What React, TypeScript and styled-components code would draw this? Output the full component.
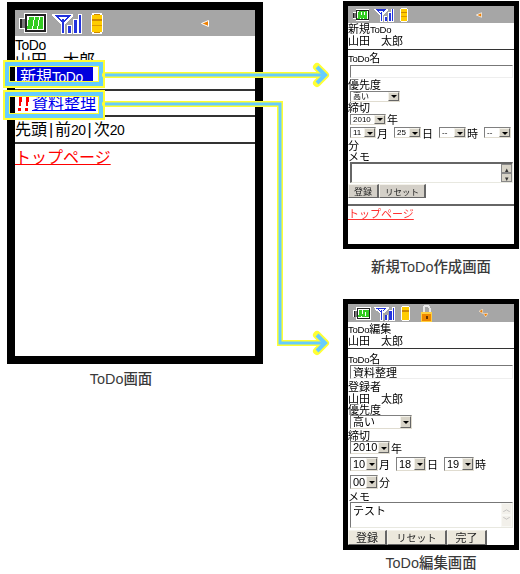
import React from 'react';
import styled, { createGlobalStyle } from 'styled-components';

const GlobalStyle = createGlobalStyle`
  html, body {
    margin: 0;
    padding: 0;
    background: #fff;
  }
`;

// status bar icons, drawn on a pixel grid
const BatteryIcon = ({ w, h }: { w: number; h: number }) => (
  <svg width={w} height={h} viewBox="0 0 28 20" shapeRendering="crispEdges">
    <rect x="5" y="0" width="23" height="20" fill="#fff" />
    <rect x="0" y="5" width="6" height="11" fill="#fff" />
    <rect x="6" y="1" width="21" height="18" fill="#222" />
    <rect x="1" y="6" width="5" height="9" fill="#777" />
    <rect x="1" y="6" width="2" height="9" fill="#222" />
    <rect x="8" y="3" width="17" height="14" fill="#fff" />
    <path d="M10 4h5l-2 12h-5zM16 4h4l-2 12h-4zM21 4h3v12h-5z" fill="#33cc22" />
  </svg>
);

const AntennaIcon = ({ w, h }: { w: number; h: number }) => (
  <svg width={w} height={h} viewBox="0 0 30 21" shapeRendering="crispEdges">
    <path d="M0 1h21v3l-8 7v10h-4v-10l-8-7z" fill="#fff" />
    <path d="M2 2h17l-7 7v11h-2v-11zM6 4l4 4v-2h2v2l3-4z" fill="#2233dd" fillRule="evenodd" />
    <rect x="15" y="12" width="5" height="9" fill="#fff" />
    <rect x="16" y="13" width="3" height="7" fill="#2233dd" />
    <rect x="21" y="6" width="5" height="15" fill="#fff" />
    <rect x="22" y="7" width="3" height="13" fill="#2233dd" />
    <rect x="26" y="1" width="4" height="20" fill="#fff" />
    <rect x="27" y="2" width="2" height="18" fill="#2233dd" />
  </svg>
);

const CoinIcon = ({ w, h }: { w: number; h: number }) => (
  <svg width={w} height={h} viewBox="0 0 12 21" shapeRendering="crispEdges">
    <rect x="1" y="0" width="10" height="21" fill="#fff" />
    <rect x="0" y="2" width="12" height="17" fill="#fff" />
    <rect x="1" y="2" width="10" height="4" fill="#ffcc00" />
    <rect x="1" y="8" width="10" height="11" fill="#ffcc00" />
    <rect x="3" y="1" width="6" height="1" fill="#cc8800" />
    <rect x="1" y="6" width="10" height="2" fill="#cc8800" />
    <rect x="1" y="12" width="10" height="1" fill="#dd9900" />
    <rect x="3" y="19" width="6" height="1" fill="#cc8800" />
  </svg>
);

const LockIcon = () => (
  <svg width={11} height={17} viewBox="0 0 11 17" shapeRendering="crispEdges">
    <path d="M2.5 8v-5l1.5-2h3l1.5 2v5" fill="none" stroke="#e8e8e8" strokeWidth="2" />
    <rect x="0" y="7" width="11" height="10" fill="#ffd040" />
    <rect x="1" y="9" width="9" height="7" fill="#ee8800" />
    <rect x="5" y="11" width="2" height="3" fill="#663300" />
  </svg>
);

const SignalArrow = ({ w, h, dual }: { w: number; h: number; dual?: boolean }) => (
  <svg width={w} height={h} viewBox={dual ? '0 0 10 9' : '0 0 8 7'}>
    {dual ? (
      <>
        <path d="M0 2.5L4 0v5z" fill="#f08000" stroke="#fff" strokeWidth="0.6" />
        <path d="M5 5h5L7.5 9z" fill="#f08000" stroke="#fff" strokeWidth="0.6" />
      </>
    ) : (
      <path d="M0.5 3.5L7.5 0.5v6z" fill="#f08000" stroke="#fff" strokeWidth="1" />
    )}
  </svg>
);

const UrgentIcon = () => (
  <svg width={14} height={17} viewBox="0 0 14 17" shapeRendering="crispEdges">
    <path d="M2 1h4l-1 1v2l-1 8h-2zM9 1h4l-1 1v2l-1 8h-2z" fill="#ff0000" />
    <rect x="1" y="14" width="3" height="3" fill="#ff0000" />
    <rect x="8" y="14" width="3" height="3" fill="#ff0000" />
  </svg>
);

const ArrowSelect = ({ value, w, h, wide }: { value: string; w: number; h: number; wide?: boolean }) => (
  <SelectBox $w={w} $h={h}>
    <SelectValue $wide={wide} $h={h}>{value}</SelectValue>
    <SelectButton />
  </SelectBox>
);

const NewScreen = () => (
  <>
    <Line $h={11}>新規<Half>ToDo</Half></Line>
    <Line $h={12}>山田　太郎</Line>
    <Divider $mt={3} />
    <Line $h={13} $mt={1}><Half>ToDo</Half>名</Line>
    <TextInput $h={13} $mt={1} />
    <Line $h={12}>優先度</Line>
    <Row $h={12}><ArrowSelect value="高い" w={50} h={11} /></Row>
    <Line $h={11}>締切</Line>
    <Row $h={12}>
      <Field><ArrowSelect value="2010" w={36} h={11} /><Unit>年</Unit></Field>
    </Row>
    <Row $h={13} $mt={1}>
      <Field><ArrowSelect value="11" w={26} h={11} /><Unit>月</Unit></Field>
      <Field><ArrowSelect value="25" w={27} h={11} /><Unit>日</Unit></Field>
      <Field><ArrowSelect value="--" w={27} h={11} /><Unit>時</Unit></Field>
      <Field><ArrowSelect value="--" w={27} h={11} /></Field>
    </Row>
    <Line $h={11} $mt={1}>分</Line>
    <Line $h={11}>メモ</Line>
    <Memo $h={21} $active>
      <Scroll><ScrollStep>▴</ScrollStep><ScrollStep>▾</ScrollStep></Scroll>
    </Memo>
    <Buttons $mt={1}>
      <FormButton $w={31} $h={14} $fs={9}>登録</FormButton>
      <FormButton $w={47} $h={14} $fs={8.5}>リセット</FormButton>
    </Buttons>
    <Divider $mt={6} $color="#666" $size={2} />
    <Line $h={13} $mt={1}><TopLink $soft>トップページ</TopLink></Line>
  </>
);

const EditScreen = () => (
  <>
    <Line $h={12}><Half>ToDo</Half>編集</Line>
    <Line $h={13}>山田　太郎</Line>
    <Divider $mt={1} />
    <Line $h={12} $mt={3}><Half>ToDo</Half>名</Line>
    <TextInput $h={14} $mt={1}>資料整理</TextInput>
    <Line $h={12} $mt={1}>登録者</Line>
    <Line $h={12}>山田　太郎</Line>
    <Line $h={11}>優先度</Line>
    <Row $h={14}><ArrowSelect value="高い" w={62} h={14} wide /></Row>
    <Line $h={12}>締切</Line>
    <Row $h={13}>
      <Field><ArrowSelect value="2010" w={40} h={13} wide /><Unit>年</Unit></Field>
    </Row>
    <Row $h={15} $mt={2}>
      <Field><ArrowSelect value="10" w={28} h={14} wide /><Unit>月</Unit></Field>
      <Field><ArrowSelect value="18" w={30} h={14} wide /><Unit>日</Unit></Field>
      <Field><ArrowSelect value="19" w={30} h={14} wide /><Unit>時</Unit></Field>
    </Row>
    <Row $h={15} $mt={3}>
      <Field><ArrowSelect value="00" w={28} h={14} wide /><Unit>分</Unit></Field>
    </Row>
    <Line $h={12} $mt={1}>メモ</Line>
    <Memo $h={26}>
      テスト
      <Scroll><ScrollStep $faded>︿</ScrollStep><ScrollStep $faded>﹀</ScrollStep></Scroll>
    </Memo>
    <Buttons $mt={2}>
      <FormButton $w={39} $h={15} $fs={11} $light>登録</FormButton>
      <FormButton $w={60} $h={15} $fs={10} $light>リセット</FormButton>
      <FormButton $w={40} $h={15} $fs={11} $light>完了</FormButton>
    </Buttons>
  </>
);

const App: React.FC = () => (
  <Page>
    <GlobalStyle />
    <LeftColumn>
      <Phone $w={256} $h={362} $border={8}>
        <StatusBar $h={26} $pad={4} $gap={5}>
          <BatteryIcon w={28} h={20} />
          <AntennaIcon w={30} h={21} />
          <IconSlot $ml={4}><CoinIcon w={12} h={21} /></IconSlot>
          <ArrowSlot $mr={46}><SignalArrow w={8} h={7} /></ArrowSlot>
        </StatusBar>
        <BigScreen>
          <Line $h={15}><Half>ToDo</Half></Line>
          <Line $h={16}>山田　太郎</Line>
          <Line $h={16}>
            <Selected>新規<Half>ToDo</Half></Selected>
          </Line>
          <Divider $mt={6} $size={2} />
          <TodoRow>
            <UrgentIcon />
            <TodoLink>資料整理</TodoLink>
          </TodoRow>
          <Divider $mt={3} $size={2} />
          <Line $h={18} $mt={2}>
            先頭<Bar>|</Bar>前<Half>20</Half><Bar>|</Bar>次<Half>20</Half>
          </Line>
          <Divider $mt={5} $size={2} />
          <Line $h={18} $mt={3}><TopLink>トップページ</TopLink></Line>
        </BigScreen>
      </Phone>
      <Caption $mt={6} $pr={28}>ToDo画面</Caption>
    </LeftColumn>

    <RightColumn>
      <Phone $w={176} $h={248} $border={5} $small>
        <StatusBar $h={17} $pad={4} $gap={4}>
          <BatteryIcon w={18} h={12} />
          <AntennaIcon w={20} h={14} />
          <IconSlot $ml={2}><CoinIcon w={8} h={14} /></IconSlot>
          <ArrowSlot $mr={32}><SignalArrow w={6} h={6} /></ArrowSlot>
        </StatusBar>
        <NewScreen />
      </Phone>
      <Caption $mt={9}>新規ToDo作成画面</Caption>
      <Phone $w={176} $h={251} $border={5} $small $mt={23}>
        <StatusBar $h={18} $pad={4} $gap={2}>
          <BatteryIcon w={20} h={13} />
          <AntennaIcon w={21} h={15} />
          <IconSlot $ml={4}><CoinIcon w={9} h={15} /></IconSlot>
          <IconSlot $ml={9}><LockIcon /></IconSlot>
          <ArrowSlot $mr={26}><SignalArrow w={9} h={8} dual /></ArrowSlot>
        </StatusBar>
        <EditScreen />
      </Phone>
      <Caption $mt={4}>ToDo編集画面</Caption>
    </RightColumn>

    <Highlight $top={60} $h={28} />
    <Highlight $top={90} $h={30} />
    <Connectors width={520} height={574} viewBox="0 0 520 574">
      <g fill="none" stroke="#ffff33" strokeWidth="6" strokeLinejoin="round" strokeLinecap="round">
        <path d="M105 75H325" />
        <path d="M317 67L325 75L317 83" strokeWidth="8" />
        <path d="M105 104H280V343H325" strokeLinejoin="miter" />
        <path d="M317 335L325 343L317 351" strokeWidth="8" />
      </g>
      <g fill="none" stroke="#66ccff" strokeWidth="3">
        <path d="M105 75H325" />
        <path d="M317 67L325 75L317 83" strokeWidth="4" />
        <path d="M105 104H280V343H325" />
        <path d="M317 335L325 343L317 351" strokeWidth="4" />
      </g>
    </Connectors>
  </Page>
);

export default App;

const jpFont = `"Noto Sans CJK JP", "Liberation Sans", sans-serif`;

const Page = styled.div`
  position: relative;
  display: flex;
  align-items: flex-start;
  box-sizing: border-box;
  width: 520px;
  height: 574px;
  overflow: hidden;
  font-family: ${jpFont};
  color: #000;
`;

const LeftColumn = styled.div`
  display: flex;
  flex-direction: column;
  margin: 2px 0 0 7px;
  width: 256px;
`;

const RightColumn = styled.div`
  display: flex;
  flex-direction: column;
  margin: 1px 0 0 80px;
  width: 176px;
`;

const Phone = styled.div<{ $w: number; $h: number; $border: number; $small?: boolean; $mt?: number }>`
  box-sizing: border-box;
  width: ${(p) => p.$w}px;
  height: ${(p) => p.$h}px;
  margin-top: ${(p) => p.$mt ?? 0}px;
  border: ${(p) => p.$border}px solid #000;
  background: #fff;
  overflow: hidden;
  font-size: ${(p) => (p.$small ? 11 : 16)}px;
  ${(p) => p.$small && 'filter: blur(0.4px);'}
`;

const StatusBar = styled.div<{ $h: number; $pad: number; $gap: number }>`
  display: flex;
  align-items: center;
  gap: ${(p) => p.$gap}px;
  height: ${(p) => p.$h}px;
  padding-left: ${(p) => p.$pad}px;
  background: #a6a6a6;
`;

const IconSlot = styled.span<{ $ml: number }>`
  display: flex;
  margin-left: ${(p) => p.$ml}px;
`;

const ArrowSlot = styled.span<{ $mr: number }>`
  display: flex;
  margin: 0 ${(p) => p.$mr}px 0 auto;
`;

const BigScreen = styled.div`
  display: flex;
  flex-direction: column;
`;

const Line = styled.div<{ $h: number; $mt?: number }>`
  height: ${(p) => p.$h}px;
  line-height: ${(p) => p.$h}px;
  margin-top: ${(p) => p.$mt ?? 0}px;
  white-space: nowrap;
`;

// half-width latin, the handsets draw it at half the width of a kanji
const Half = styled.span`
  font-family: "Liberation Sans", ${jpFont};
  font-size: 0.87em;
  letter-spacing: -0.03em;
`;

const Bar = styled.span`
  display: inline-block;
  width: 8px;
  text-align: center;
  font-family: "Liberation Sans", ${jpFont};
`;

const Divider = styled.div<{ $mt: number; $size?: number; $color?: string }>`
  height: ${(p) => p.$size ?? 1}px;
  margin-top: ${(p) => p.$mt}px;
  background: ${(p) => p.$color ?? '#333'};
`;

const Selected = styled.span`
  display: inline-block;
  box-sizing: border-box;
  width: 79px;
  height: 16px;
  margin-left: 1px;
  padding-left: 3px;
  background: #0000dd;
  color: #fff;
  border-left: 1px solid #fff;
  border-right: 2px solid #fff;
  line-height: 16px;
  white-space: nowrap;
`;

const TodoRow = styled.div`
  display: flex;
  align-items: center;
  gap: 1px;
  height: 19px;
  margin-top: 2px;
  padding-left: 2px;
`;

const TodoLink = styled.a`
  color: #0000ee;
  text-decoration: underline;
  line-height: 19px;
`;

const TopLink = styled.a<{ $soft?: boolean }>`
  color: ${(p) => (p.$soft ? '#ff3333' : '#ff0000')};
  text-decoration: underline;
`;

const TextInput = styled.div<{ $h: number; $mt: number }>`
  box-sizing: border-box;
  height: ${(p) => p.$h}px;
  margin: ${(p) => p.$mt}px 1px 0 2px;
  padding-left: 2px;
  border-top: 1px solid #777;
  border-left: 1px solid #777;
  border-right: 1px solid #eee;
  border-bottom: 1px solid #eee;
  line-height: ${(p) => p.$h - 2}px;
  white-space: nowrap;
`;

const Row = styled.div<{ $h: number; $mt?: number }>`
  display: flex;
  align-items: center;
  gap: 6px;
  height: ${(p) => p.$h}px;
  margin-top: ${(p) => p.$mt ?? 0}px;
  padding-left: 2px;
`;

const Field = styled.span`
  display: inline-flex;
  align-items: center;
  gap: 1px;
`;

const Unit = styled.span`
  line-height: 12px;
`;

const SelectBox = styled.span<{ $w: number; $h: number }>`
  display: flex;
  box-sizing: border-box;
  width: ${(p) => p.$w}px;
  height: ${(p) => p.$h}px;
  border-top: 1px solid #808080;
  border-left: 1px solid #808080;
  border-right: 1px solid #e0dcd0;
  border-bottom: 1px solid #e0dcd0;
  background: #fff;
`;

const SelectValue = styled.span<{ $wide?: boolean; $h: number }>`
  flex: 1;
  padding-left: 2px;
  overflow: hidden;
  font-family: "Liberation Sans", ${jpFont};
  font-size: ${(p) => (p.$wide ? 11 : 8)}px;
  line-height: ${(p) => p.$h - 2}px;
  white-space: nowrap;
`;

const SelectButton = styled.span`
  position: relative;
  flex: none;
  box-sizing: border-box;
  width: 11px;
  background: #d8d4c8;
  border-top: 1px solid #f4f2ea;
  border-left: 1px solid #f4f2ea;
  border-right: 1px solid #666;
  border-bottom: 1px solid #666;

  &::after {
    content: '';
    position: absolute;
    left: 50%;
    top: 50%;
    margin: -1px 0 0 -3px;
    border: 3px solid transparent;
    border-top-color: #000;
    border-bottom-width: 0;
  }
`;

const Memo = styled.div<{ $h: number; $active?: boolean }>`
  position: relative;
  box-sizing: border-box;
  height: ${(p) => p.$h}px;
  margin: 0 1px 0 2px;
  padding-left: 2px;
  border-top: ${(p) => (p.$active ? '2px solid #666' : '1px solid #777')};
  border-left: ${(p) => (p.$active ? '2px solid #666' : '1px solid #777')};
  border-right: 1px solid #e8e8e0;
  border-bottom: 1px solid #e8e8e0;
  line-height: 15px;
`;

const Scroll = styled.div`
  position: absolute;
  top: 0;
  right: 0;
  bottom: 0;
  display: flex;
  flex-direction: column;
  width: 11px;
`;

const ScrollStep = styled.span<{ $faded?: boolean }>`
  flex: 1;
  box-sizing: border-box;
  background: ${(p) => (p.$faded ? '#f2f0ea' : '#d8d4c8')};
  border: 1px solid ${(p) => (p.$faded ? '#f8f8f4' : '#888')};
  color: ${(p) => (p.$faded ? '#aaa' : '#333')};
  font-size: 7px;
  line-height: 8px;
  text-align: center;
  overflow: hidden;
`;

const Buttons = styled.div<{ $mt: number }>`
  display: flex;
  margin-top: ${(p) => p.$mt}px;
`;

const FormButton = styled.button<{ $w: number; $h: number; $fs: number; $light?: boolean }>`
  box-sizing: border-box;
  width: ${(p) => p.$w}px;
  height: ${(p) => p.$h}px;
  padding: 0;
  background: ${(p) => (p.$light ? '#ece8dc' : '#d4d0c8')};
  border-top: 1px solid #f4f2ea;
  border-left: 1px solid #f4f2ea;
  border-right: 2px solid #666;
  border-bottom: 1px solid #666;
  color: #222;
  font-family: ${jpFont};
  font-size: ${(p) => p.$fs}px;
  line-height: 11px;
`;

const Caption = styled.div<{ $mt: number; $pr?: number }>`
  margin-top: ${(p) => p.$mt}px;
  padding-right: ${(p) => p.$pr ?? 0}px;
  color: #3a3a3a;
  font-family: "Liberation Sans", "Noto Sans CJK JP", sans-serif;
  font-size: 14.4px;
  font-weight: 500;
  line-height: 18px;
  text-align: center;
`;

const Highlight = styled.div<{ $top: number; $h: number }>`
  position: absolute;
  left: 3px;
  top: ${(p) => p.$top}px;
  box-sizing: border-box;
  width: 102px;
  height: ${(p) => p.$h}px;
  border: 2px solid #ffff33;
  box-shadow: inset 0 0 0 4px #66ccff, inset 0 0 0 5px #ffff33;
`;

const Connectors = styled.svg`
  position: absolute;
  left: 0;
  top: 0;
  pointer-events: none;
`;
